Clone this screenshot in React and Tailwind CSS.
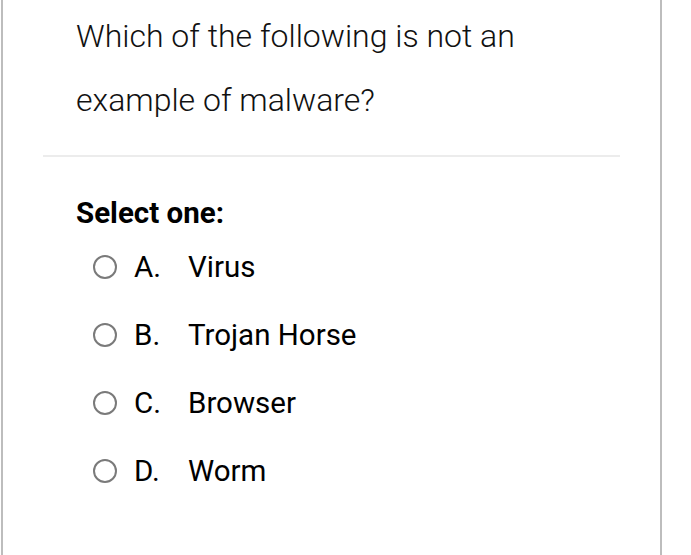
import React from "react";

const options = [
  { letter: "A.", text: "Virus" },
  { letter: "B.", text: "Trojan Horse" },
  { letter: "C.", text: "Browser" },
  { letter: "D.", text: "Worm" },
];

const Radio = () => (
  <span className="block w-[24px] h-[24px] rounded-full border-2 border-[#7a7a7a] bg-white shrink-0" />
);

export default function App() {
  return (
    <div
      className="w-[691px] h-[555px] bg-white overflow-hidden"
      style={{ fontFamily: "Roboto, 'Liberation Sans', sans-serif" }}
    >
      <div className="ml-[1px] w-[661px] h-full border-x-2 border-[#bdbdbd] bg-white">
        <div className="pl-[73px] pr-[30px] pt-[4px] text-[32px] font-light leading-[64px] text-[#111]">
          Which of the following is not an
          <br />
          example of malware?
        </div>
        <div className="mx-[40px] mt-[23px] h-[2px] bg-[#ececec]" />
        <div className="pl-[73px] pt-[36px] text-[29.5px] font-bold leading-[40px] text-black">
          Select one:
        </div>
        <div className="flex flex-col">
          {options.map((o) => (
            <div key={o.letter} className="flex items-center h-[68px] pl-[90px]">
              <Radio />
              <span className="ml-[17px] w-[54px] text-[29.5px] text-black">{o.letter}</span>
              <span className="text-[29.5px] text-black">{o.text}</span>
            </div>
          ))}
        </div>
      </div>
    </div>
  );
}
